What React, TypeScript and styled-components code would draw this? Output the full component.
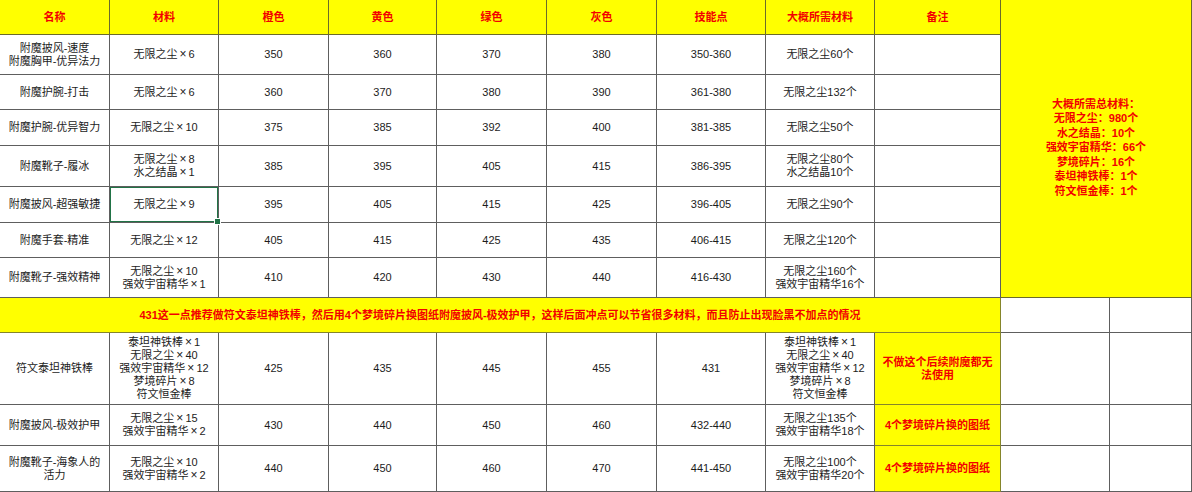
import React from "react";
import styled, { createGlobalStyle, css } from "styled-components";

const GlobalStyle = createGlobalStyle`
  html, body {
    margin: 0;
    padding: 0;
    background: #fff;
  }
  body {
    font-family: "Liberation Sans", "Noto Sans CJK SC", sans-serif;
  }
`;

const Sheet = styled.div`
  display: grid;
  grid-template-columns: 110px 109px 110px 108px 110px 110px 109px 109px 126px 109px 82px;
  grid-template-rows: 35px 40px 35px 36px 41px 36px 35px 40px 35px 72px 41px 46px;
  width: 1192px;
  height: 492px;
  overflow: hidden;
  font-family: "Liberation Sans", "Noto Sans CJK SC", sans-serif;
  font-size: 11px;
  line-height: 13px;
  color: #1c1c1c;
`;

type Tone = "plain" | "head" | "note";

const Cell = styled.div<{ $tone?: Tone; $cols?: number; $rows?: number; $selected?: boolean }>`
  box-sizing: border-box;
  position: relative;
  display: flex;
  flex-direction: column;
  align-items: center;
  justify-content: center;
  padding: 0 4px;
  text-align: center;
  background: #fff;
  border-right: 1px solid #5e5e5e;
  border-bottom: 1px solid #5e5e5e;
  grid-column: span ${(p) => p.$cols ?? 1};
  grid-row: span ${(p) => p.$rows ?? 1};

  ${(p) =>
    p.$tone === "head" &&
    css`
      background: #ffff00;
      color: #f20000;
      font-weight: 700;
      border-color: #6b6b2a;
    `}

  ${(p) =>
    p.$tone === "note" &&
    css`
      background: #ffff00;
      color: #f20000;
      font-weight: 700;
      border-color: #85852a;
    `}

  ${(p) =>
    p.$selected &&
    css`
      box-shadow: inset 0 0 0 1px #217346;
    `}
`;

const Handle = styled.span`
  position: absolute;
  right: -3px;
  bottom: -3px;
  width: 5px;
  height: 5px;
  background: #217346;
  border: 1px solid #fff;
  z-index: 2;
`;

const Line = styled.span`
  display: block;
  white-space: nowrap;
`;

const Times = styled.span`
  margin: 0 2px;
  font-size: 12px;
`;

const Summary = styled(Cell)`
  line-height: 14.4px;
  padding-bottom: 2px;
`;

const Banner = styled(Cell)`
  white-space: nowrap;
`;

const NoteText = styled.span`
  display: block;
  line-height: 13px;
`;

type Row = {
  name: string[];
  mats: string[];
  levels: number[];
  skill: string;
  need: string[];
  note?: string;
  selected?: boolean;
};

const topRows: Row[] = [
  {
    name: ["附魔披风-速度", "附魔胸甲-优异法力"],
    mats: ["无限之尘×6"],
    levels: [350, 360, 370, 380],
    skill: "350-360",
    need: ["无限之尘60个"],
  },
  {
    name: ["附魔护腕-打击"],
    mats: ["无限之尘×6"],
    levels: [360, 370, 380, 390],
    skill: "361-380",
    need: ["无限之尘132个"],
  },
  {
    name: ["附魔护腕-优异智力"],
    mats: ["无限之尘×10"],
    levels: [375, 385, 392, 400],
    skill: "381-385",
    need: ["无限之尘50个"],
  },
  {
    name: ["附魔靴子-履冰"],
    mats: ["无限之尘×8", "水之结晶×1"],
    levels: [385, 395, 405, 415],
    skill: "386-395",
    need: ["无限之尘80个", "水之结晶10个"],
  },
  {
    name: ["附魔披风-超强敏捷"],
    mats: ["无限之尘×9"],
    levels: [395, 405, 415, 425],
    skill: "396-405",
    need: ["无限之尘90个"],
    selected: true,
  },
  {
    name: ["附魔手套-精准"],
    mats: ["无限之尘×12"],
    levels: [405, 415, 425, 435],
    skill: "406-415",
    need: ["无限之尘120个"],
  },
  {
    name: ["附魔靴子-强效精神"],
    mats: ["无限之尘×10", "强效宇宙精华×1"],
    levels: [410, 420, 430, 440],
    skill: "416-430",
    need: ["无限之尘160个", "强效宇宙精华16个"],
  },
];

const titanMats = ["泰坦神铁棒×1", "无限之尘×40", "强效宇宙精华×12", "梦境碎片×8", "符文恒金棒"];

const bottomRows: Row[] = [
  {
    name: ["符文泰坦神铁棒"],
    mats: titanMats,
    levels: [425, 435, 445, 455],
    skill: "431",
    need: titanMats,
    note: "不做这个后续附魔都无法使用",
  },
  {
    name: ["附魔披风-极效护甲"],
    mats: ["无限之尘×15", "强效宇宙精华×2"],
    levels: [430, 440, 450, 460],
    skill: "432-440",
    need: ["无限之尘135个", "强效宇宙精华18个"],
    note: "4个梦境碎片换的图纸",
  },
  {
    name: ["附魔靴子-海象人的", "活力"],
    mats: ["无限之尘×10", "强效宇宙精华×2"],
    levels: [440, 450, 460, 470],
    skill: "441-450",
    need: ["无限之尘100个", "强效宇宙精华20个"],
    note: "4个梦境碎片换的图纸",
  },
];

const headers = ["名称", "材料", "橙色", "黄色", "绿色", "灰色", "技能点", "大概所需材料", "备注"];

const totals = [
  "大概所需总材料：",
  "无限之尘：980个",
  "水之结晶：10个",
  "强效宇宙精华：66个",
  "梦境碎片：16个",
  "泰坦神铁棒：1个",
  "符文恒金棒：1个",
];

// the sheet shows "×" as a full-width sign, so give it some room
const withTimes = (t: string) => {
  const parts = t.split("×");
  if (parts.length < 2) return t;
  return (
    <>
      {parts[0]}
      <Times>×</Times>
      {parts[1]}
    </>
  );
};

const Lines = ({ items }: { items: string[] }) => (
  <>
    {items.map((t, i) => (
      <Line key={i}>{withTimes(t)}</Line>
    ))}
  </>
);

const DataRow = ({ row, tail }: { row: Row; tail: boolean }) => (
  <>
    <Cell>
      <Lines items={row.name} />
    </Cell>
    <Cell $selected={row.selected}>
      <Lines items={row.mats} />
      {row.selected && <Handle />}
    </Cell>
    {row.levels.map((lv) => (
      <Cell key={lv}>{lv}</Cell>
    ))}
    <Cell>{row.skill}</Cell>
    <Cell>
      <Lines items={row.need} />
    </Cell>
    {row.note ? (
      <Cell $tone="note">
        <NoteText>{row.note}</NoteText>
      </Cell>
    ) : (
      <Cell />
    )}
    {tail && (
      <>
        <Cell />
        <Cell />
      </>
    )}
  </>
);

export default function App() {
  return (
    <>
      <GlobalStyle />
      <Sheet>
        {headers.map((h) => (
          <Cell key={h} $tone="head">
            {h}
          </Cell>
        ))}
        <Summary $tone="head" $cols={2} $rows={8}>
          <Lines items={totals} />
        </Summary>

        {topRows.map((r, i) => (
          <DataRow key={i} row={r} tail={false} />
        ))}

        <Banner $tone="note" $cols={9}>
          431这一点推荐做符文泰坦神铁棒，然后用4个梦境碎片换图纸附魔披风-极效护甲，这样后面冲点可以节省很多材料，而且防止出现脸黑不加点的情况
        </Banner>
        <Cell />
        <Cell />

        {bottomRows.map((r, i) => (
          <DataRow key={i} row={r} tail />
        ))}
      </Sheet>
    </>
  );
}
